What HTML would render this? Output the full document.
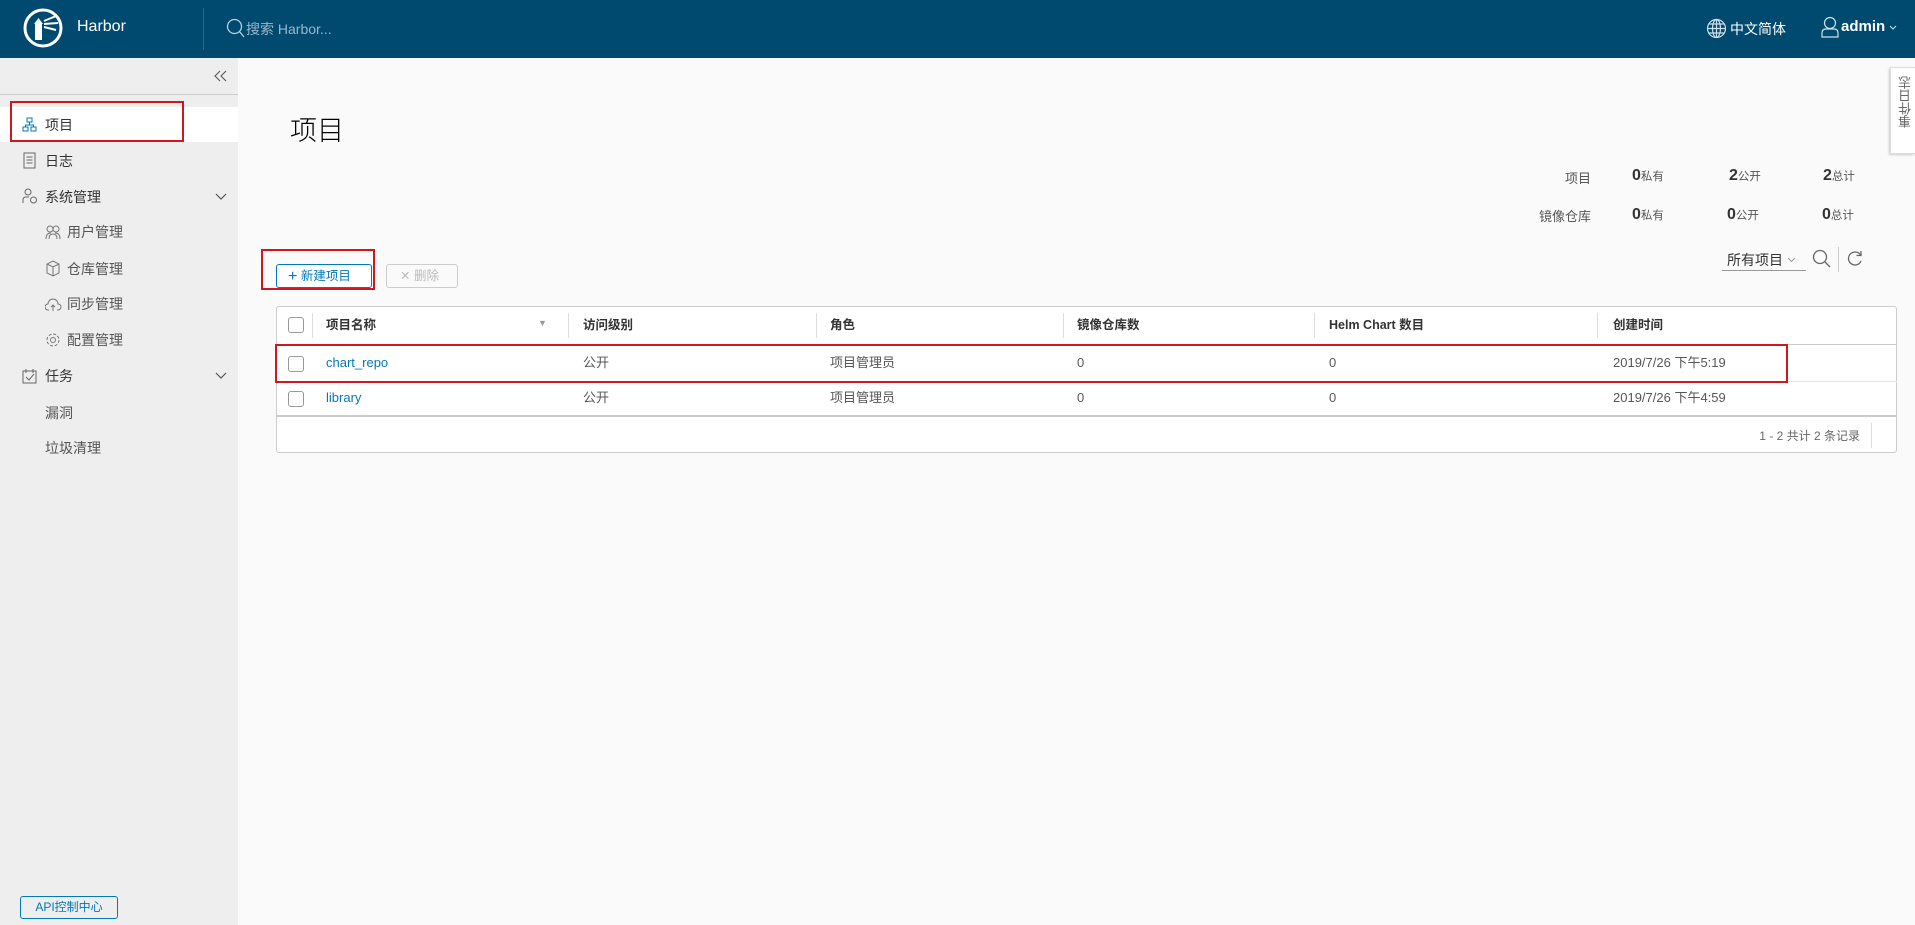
<!DOCTYPE html>
<html><head><meta charset="utf-8"><style>
*{box-sizing:border-box;margin:0;padding:0}
body{width:1915px;height:925px;overflow:hidden;background:#fafafa;font-family:"Liberation Sans","Noto Sans CJK SC",sans-serif;color:#565656;position:relative}
.a{position:absolute;white-space:nowrap}
.hdr{position:absolute;left:0;top:0;width:1915px;height:58px;background:#004a70}
.side{position:absolute;left:0;top:58px;width:238px;height:867px;background:#eee}
.nav{font-size:14px;color:#333;line-height:20px}
.sub{color:#555}
.tbl{position:absolute;left:276px;top:306px;width:1621px;height:147px;background:#fff;border:1px solid #ccc;border-radius:3px}
.cb{position:absolute;width:16px;height:16px;border:1px solid #999;border-radius:3px;background:#fff}
.th{font-size:12.5px;color:#333;font-weight:bold;line-height:16px}
.td{font-size:13px;color:#565656;line-height:16px}
.vd{position:absolute;width:1px;background:#ddd}
.hl{position:absolute;height:1px;background:#ddd}
.st{font-size:16px;color:#333;font-weight:bold}
.st span{font-size:11.5px;font-weight:normal;color:#555}
</style></head><body>
<div class="hdr"></div>
<svg class="a" style="left:22px;top:7px" width="42" height="42" viewBox="0 0 42 42"><circle cx="21" cy="21" r="18" fill="none" stroke="#fff" stroke-width="3"/><rect x="13" y="17" width="7" height="16" fill="#fff"/><path d="M12 17 L16.5 11 L21 17Z" fill="#fff"/><path d="M22 14 L34 9 M22 17 L36 16 M22 20 L34 23" stroke="#fff" stroke-width="2"/></svg>
<div class="a" style="left:77px;top:18px;font-size:16px;color:#fff">Harbor</div>
<div class="a" style="left:203px;top:8px;width:1px;height:42px;background:#2a6688"></div>
<svg class="a" style="left:226px;top:18px" width="20" height="22"><circle cx="8.5" cy="8.5" r="7" fill="none" stroke="#b8cfdc" stroke-width="1.3"/><path d="M13.5 13.5 L18 19" stroke="#b8cfdc" stroke-width="1.3"/></svg>
<div class="a" style="left:246px;top:19px;font-size:14px;color:#9ab7c9">搜索 Harbor...</div>
<svg class="a" style="left:1706px;top:18px" width="21" height="21" viewBox="0 0 21 21" fill="none" stroke="#cfe0ea" stroke-width="1.2"><circle cx="10.5" cy="10.5" r="9"/><ellipse cx="10.5" cy="10.5" rx="4" ry="9"/><path d="M1.5 10.5h18M10.5 1.5v18M3 6h15M3 15h15"/></svg>
<div class="a" style="left:1730px;top:19px;font-size:14px;color:#fff">中文简体</div>
<svg class="a" style="left:1821px;top:16px" width="18" height="22" fill="none" stroke="#cfe0ea" stroke-width="1.2"><circle cx="9" cy="7" r="5.5"/><path d="M1 21 v-4 q0-4 4-4 h8 q4 0 4 4 v4z"/></svg>
<div class="a" style="left:1841px;top:18px;font-size:15px;color:#fff;font-weight:bold">admin</div>
<svg class="a" style="left:1889px;top:25px" width="8" height="6" fill="none" stroke="#cfe0ea"><path d="M1 1l3 3 3-3"/></svg>

<div class="side"></div>
<svg class="a" style="left:214px;top:70px" width="14" height="12" fill="none" stroke="#555" stroke-width="1.1"><path d="M6 1L1 6l5 5M12 1L7 6l5 5"/></svg>
<div class="a" style="left:0;top:94px;width:238px;height:1px;background:#ccc"></div>
<div class="a" style="left:0;top:107px;width:238px;height:35px;background:#fff"></div>
<div class="a" style="left:10px;top:101px;width:174px;height:41px;border:2px solid #d0161f"></div>
<svg class="a" style="left:22px;top:117px" width="15" height="15" fill="none" stroke="#0079b8"><rect x="5" y="1" width="5" height="4"/><rect x="1" y="10" width="5" height="4"/><rect x="9" y="10" width="5" height="4"/><path d="M7.5 5v3M3.5 10V8h8v2"/></svg>
<div class="a nav" style="left:45px;top:115px">项目</div>
<svg class="a" style="left:23px;top:152px" width="13" height="17" fill="none" stroke="#666"><rect x="1" y="1" width="11" height="15"/><path d="M3.5 5h6M3.5 8h6M3.5 11h6"/></svg>
<div class="a nav" style="left:45px;top:151px">日志</div>
<svg class="a" style="left:22px;top:188px" width="16" height="17" fill="none" stroke="#666"><circle cx="6" cy="4" r="3"/><path d="M1 15v-3q0-3 3-3h3"/><circle cx="11.5" cy="12" r="3"/></svg>
<div class="a nav" style="left:45px;top:187px">系统管理</div>
<svg class="a" style="left:215px;top:193px" width="12" height="8" fill="none" stroke="#555" stroke-width="1.2"><path d="M1 1l5 5 5-5"/></svg>
<svg class="a" style="left:45px;top:224px" width="16" height="16" fill="none" stroke="#777"><circle cx="5" cy="5" r="3"/><circle cx="11" cy="5" r="3"/><path d="M1 15q0-6 5-6M15 15q0-6-5-6M4 15q0-5 4-5t4 5"/></svg>
<div class="a nav sub" style="left:67px;top:222px">用户管理</div>
<svg class="a" style="left:46px;top:260px" width="14" height="17" fill="none" stroke="#777"><path d="M7 1L13 4v9L7 16L1 13V4z M1 4l6 3 6-3M7 7v9"/></svg>
<div class="a nav sub" style="left:67px;top:259px">仓库管理</div>
<svg class="a" style="left:45px;top:297px" width="17" height="15" fill="none" stroke="#777"><path d="M4 13H3a3 3 0 0 1 0-6 5 5 0 0 1 10 0 3 3 0 0 1 0 6h-1M8 14v-6M6 10l2-2 2 2"/></svg>
<div class="a nav sub" style="left:67px;top:294px">同步管理</div>
<svg class="a" style="left:45px;top:332px" width="16" height="16" fill="none" stroke="#777"><circle cx="8" cy="8" r="2.5"/><circle cx="8" cy="8" r="6" stroke-dasharray="3 1.7"/></svg>
<div class="a nav sub" style="left:67px;top:330px">配置管理</div>
<svg class="a" style="left:22px;top:368px" width="15" height="16" fill="none" stroke="#666"><rect x="1" y="3" width="13" height="12"/><path d="M4 1v4M11 1v4M4 9l3 3 5-6"/></svg>
<div class="a nav" style="left:45px;top:366px">任务</div>
<svg class="a" style="left:215px;top:372px" width="12" height="8" fill="none" stroke="#555" stroke-width="1.2"><path d="M1 1l5 5 5-5"/></svg>
<div class="a nav sub" style="left:45px;top:403px">漏洞</div>
<div class="a nav sub" style="left:45px;top:438px">垃圾清理</div>
<div class="a" style="left:20px;top:896px;width:98px;height:23px;border:1px solid #0079b8;border-radius:3px;font-size:12px;color:#0079b8;text-align:center;line-height:21px">API控制中心</div>

<div class="a" style="left:290px;top:109px;font-size:27px;color:#000;font-weight:300">项目</div>
<div class="a td" style="left:1563px;top:171px;width:28px;text-align:right">项目</div>
<div class="a td" style="left:1535px;top:209px;width:56px;text-align:right">镜像仓库</div>
<div class="a st" style="left:1632px;top:167px">0<span>私有</span></div>
<div class="a st" style="left:1729px;top:167px">2<span>公开</span></div>
<div class="a st" style="left:1823px;top:167px">2<span>总计</span></div>
<div class="a st" style="left:1632px;top:206px">0<span>私有</span></div>
<div class="a st" style="left:1727px;top:206px">0<span>公开</span></div>
<div class="a st" style="left:1822px;top:206px">0<span>总计</span></div>

<div class="a" style="left:261px;top:249px;width:114px;height:41px;border:2px solid #d0161f"></div>
<div class="a" style="left:276px;top:264px;width:96px;height:24px;border:1px solid #0079b8;border-radius:3px;background:#fff;font-size:12.5px;color:#0079b8;line-height:22px;padding-left:11px"><span style="font-size:16px;vertical-align:-1px">+</span> 新建项目</div>
<div class="a" style="left:386px;top:264px;width:72px;height:24px;border:1px solid #ccc;border-radius:3px;font-size:12.5px;color:#bbb;line-height:22px;padding-left:13px">✕ 删除</div>
<div class="a" style="left:1727px;top:250px;font-size:14px;color:#333">所有项目</div>
<svg class="a" style="left:1787px;top:257px" width="9" height="6" fill="none" stroke="#999"><path d="M1 1l3.5 3.5L8 1"/></svg>
<div class="a" style="left:1722px;top:270px;width:84px;height:1px;background:#999"></div>
<svg class="a" style="left:1812px;top:249px" width="20" height="20" fill="none" stroke="#666" stroke-width="1.3"><circle cx="8" cy="8" r="6.5"/><path d="M13 13l5 5"/></svg>
<div class="a" style="left:1838px;top:247px;width:1px;height:25px;background:#ccc"></div>
<svg class="a" style="left:1847px;top:250px" width="16" height="17" fill="none" stroke="#666" stroke-width="1.3"><path d="M13.5 5A6.5 6.5 0 1 0 14 11"/><path d="M14 1v4.5h-4.5"/></svg>

<div class="tbl"></div>
<div class="hl" style="left:277px;top:344px;width:1620px;background:#ccc"></div>
<div class="a" style="left:277px;top:345px;width:1619px;height:70px;background:#fff"></div>
<div class="hl" style="left:277px;top:381px;width:1620px;background:#e6e6e6"></div>
<div class="hl" style="left:277px;top:415px;width:1620px;height:2px;background:#ccc"></div>
<div class="vd" style="left:312px;top:313px;height:25px"></div>
<div class="vd" style="left:568px;top:313px;height:25px"></div>
<div class="vd" style="left:816px;top:313px;height:25px"></div>
<div class="vd" style="left:1063px;top:313px;height:25px"></div>
<div class="vd" style="left:1314px;top:313px;height:25px"></div>
<div class="vd" style="left:1597px;top:313px;height:25px"></div>
<div class="cb" style="left:288px;top:317px"></div>
<div class="cb" style="left:288px;top:356px"></div>
<div class="cb" style="left:288px;top:391px"></div>
<div class="a th" style="left:326px;top:317px">项目名称</div>
<div class="a" style="left:538px;top:318px;font-size:9px;color:#999">▼</div>
<div class="a th" style="left:583px;top:317px">访问级别</div>
<div class="a th" style="left:830px;top:317px">角色</div>
<div class="a th" style="left:1077px;top:317px">镜像仓库数</div>
<div class="a th" style="left:1329px;top:317px">Helm Chart 数目</div>
<div class="a th" style="left:1613px;top:317px">创建时间</div>
<div class="a td" style="left:326px;top:355px;color:#0079b8">chart_repo</div>
<div class="a td" style="left:583px;top:355px">公开</div>
<div class="a td" style="left:830px;top:355px">项目管理员</div>
<div class="a td" style="left:1077px;top:355px">0</div>
<div class="a td" style="left:1329px;top:355px">0</div>
<div class="a td" style="left:1613px;top:355px">2019/7/26 下午5:19</div>
<div class="a td" style="left:326px;top:390px;color:#0079b8">library</div>
<div class="a td" style="left:583px;top:390px">公开</div>
<div class="a td" style="left:830px;top:390px">项目管理员</div>
<div class="a td" style="left:1077px;top:390px">0</div>
<div class="a td" style="left:1329px;top:390px">0</div>
<div class="a td" style="left:1613px;top:390px">2019/7/26 下午4:59</div>
<div class="a" style="left:275px;top:344px;width:1513px;height:39px;border:2px solid #d0161f"></div>
<div class="a" style="left:1700px;top:427px;width:160px;text-align:right;font-size:12px;color:#666">1 - 2 共计 2 条记录</div>
<div class="vd" style="left:1871px;top:423px;height:25px"></div>

<div class="a" style="left:1890px;top:67px;width:25px;height:87px;background:#fff;border:1px solid #ddd;border-right:none;box-shadow:-1px 1px 2px #ccc"></div>
<div class="a" style="left:1896px;top:76px;font-size:13px;color:#666;writing-mode:vertical-rl;transform:rotate(180deg)">事件日志</div>
</body></html>
